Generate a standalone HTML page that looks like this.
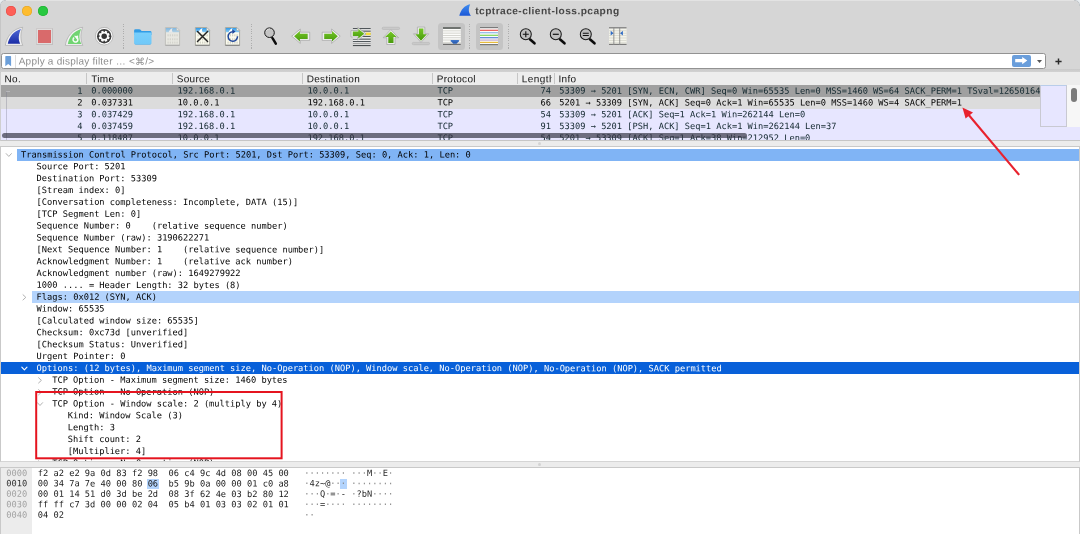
<!DOCTYPE html><html><head><meta charset="utf-8"><title>tcptrace-client-loss.pcapng</title><style>
*{margin:0;padding:0;box-sizing:border-box}
html,body{width:1080px;height:534px;overflow:hidden;background:#ececec}
body{position:relative;font-family:"Liberation Sans",sans-serif;}
.row,.hd,#title,#ph{filter:contrast(1)}
.abs{position:absolute}
.mono{font-family:"DejaVu Sans Mono","Liberation Mono",monospace;font-size:8.7px;white-space:pre;letter-spacing:0}
.row{position:absolute;left:0;height:11.77px;line-height:11.77px;white-space:pre}
.drow{height:11.86px;line-height:11.86px}
.hd{position:absolute;height:13px;line-height:13.5px;font-size:10px;letter-spacing:0.3px;color:#141414;white-space:pre;overflow:hidden}
.sep{position:absolute;top:73px;width:1px;height:10.5px;background:#c6c6c6}
svg{position:absolute;overflow:visible}
</style></head><body>
<div class="abs" id="chrome" style="left:0;top:0;width:1080px;height:72px;background:#d6d6d6"></div>
<div class="abs" style="left:0;top:0;width:1080px;height:1.2px;background:linear-gradient(#e8e8e8,#dedede)"></div>
<div class="abs" style="left:0;top:0;width:6px;height:6px;background:radial-gradient(circle at 100% 100%,rgba(0,0,0,0) 5.2px,#bfc3c6 5.6px,#dfe4e8 6.3px,#e9eef1 7px)"></div>
<div class="abs" style="left:1074px;top:0;width:6px;height:6px;background:radial-gradient(circle at 0 100%,rgba(0,0,0,0) 5.2px,#bfc3c6 5.6px,#dfe4e8 6.3px,#e9eef1 7px)"></div>
<div class="abs" style="left:0;top:6px;width:1px;height:66px;background:#c6c6c6"></div>
<div class="abs" style="left:6.15px;top:6.05px;width:9.9px;height:9.9px;border-radius:50%;background:#fe5f57;box-shadow:inset 0 0 0 0.5px #e2463f"></div>
<div class="abs" style="left:22.049999999999997px;top:6.05px;width:9.9px;height:9.9px;border-radius:50%;background:#febc2e;box-shadow:inset 0 0 0 0.5px #dea123"></div>
<div class="abs" style="left:37.95px;top:6.05px;width:9.9px;height:9.9px;border-radius:50%;background:#28c840;box-shadow:inset 0 0 0 0.5px #1aab29"></div>
<div class="abs" id="title" style="left:475px;top:4px;transform-origin:0 0;transform:matrix(1,0.0005,0,1,0.20,0.30);height:14px;line-height:14px;font-size:10.2px;font-weight:bold;color:#474747;white-space:pre;letter-spacing:0.44px">tcptrace-client-loss.pcapng</div>
<svg style="left:5px;top:27px" width="18.4" height="19" viewBox="0 0 18.4 19"><defs><linearGradient id="gfb" x1="0" y1="0" x2="0" y2="1"><stop offset="0" stop-color="#4f68d6"/><stop offset="1" stop-color="#1a2ca6"/></linearGradient></defs><path d="M0.3 18.4 C1.8 9.2 7.8 1.9 17.7 0.2 C15.4 6 15.2 13 17.8 18.4 Z" fill="#f1f1f1" stroke="#a9a9a9" stroke-width="0.7" stroke-linejoin="round"/><path d="M2.8 16.7 C4 10 8.8 3.8 16 1.9 C13.6 6.6 13 12.4 15.2 16.7 Z" fill="url(#gfb)"/></svg>
<div class="abs" style="left:35.8px;top:27.9px;width:16.9px;height:16.8px;background:#dfdddd;border:1px solid #cdcaca;border-right-color:#c2c0c0;border-bottom-color:#c2c0c0"></div>
<div class="abs" style="left:38.1px;top:30px;width:12.9px;height:12.9px;background:#d96a6b"></div>
<svg style="left:65px;top:27px" width="18.4" height="19" viewBox="0 0 18.4 19"><path d="M0.3 18.4 C1.8 9.2 7.8 1.9 17.7 0.2 C15.4 6 15.2 13 17.8 18.4 Z" fill="#f1f1f1" stroke="#a9a9a9" stroke-width="0.7" stroke-linejoin="round"/><path d="M2.8 16.9 C4 10 9 3.8 16.2 1.9 C14 6.6 13.6 12.4 16.5 16.9 Z" fill="#70d471"/><path d="M12.4 11.2 A2.4 2.4 0 1 1 9.2 10.6" stroke="#f6fdf6" stroke-width="1.5" fill="none"/><path d="M12.5 8.6 V12.4" stroke="#f6fdf6" stroke-width="1.3" fill="none"/><path d="M9 8.8 L12.6 9 L11.8 12.2 Z" fill="#f6fdf6"/></svg>
<svg style="left:95.4px;top:27.2px" width="18.4" height="18.4" viewBox="0 0 18.4 18.4"><circle cx="9.2" cy="9.2" r="8.75" fill="#fcfcfc" stroke="#8a8a8a" stroke-width="0.5"/><circle cx="9.2" cy="9.2" r="7.2" fill="#3a3a3a"/><g transform="translate(9.2 9.2)"><rect x="-1.25" y="-5.5" width="2.5" height="2.4" rx="0.3" fill="#fbfbfb" transform="rotate(22.5)"/><rect x="-1.25" y="-5.5" width="2.5" height="2.4" rx="0.3" fill="#fbfbfb" transform="rotate(67.5)"/><rect x="-1.25" y="-5.5" width="2.5" height="2.4" rx="0.3" fill="#fbfbfb" transform="rotate(112.5)"/><rect x="-1.25" y="-5.5" width="2.5" height="2.4" rx="0.3" fill="#fbfbfb" transform="rotate(157.5)"/><rect x="-1.25" y="-5.5" width="2.5" height="2.4" rx="0.3" fill="#fbfbfb" transform="rotate(202.5)"/><rect x="-1.25" y="-5.5" width="2.5" height="2.4" rx="0.3" fill="#fbfbfb" transform="rotate(247.5)"/><rect x="-1.25" y="-5.5" width="2.5" height="2.4" rx="0.3" fill="#fbfbfb" transform="rotate(292.5)"/><rect x="-1.25" y="-5.5" width="2.5" height="2.4" rx="0.3" fill="#fbfbfb" transform="rotate(337.5)"/><circle r="4.3" fill="#fbfbfb"/><circle r="2.75" fill="#333"/></g></svg>
<div class="abs" style="left:122.5px;top:23.5px;width:1px;height:25px;background:repeating-linear-gradient(to bottom,#adadad 0,#adadad 1px,transparent 1px,transparent 2.35px)"></div>
<div class="abs" style="left:251.0px;top:23.5px;width:1px;height:25px;background:repeating-linear-gradient(to bottom,#adadad 0,#adadad 1px,transparent 1px,transparent 2.35px)"></div>
<div class="abs" style="left:469.2px;top:23.5px;width:1px;height:25px;background:repeating-linear-gradient(to bottom,#adadad 0,#adadad 1px,transparent 1px,transparent 2.35px)"></div>
<div class="abs" style="left:507.5px;top:23.5px;width:1px;height:25px;background:repeating-linear-gradient(to bottom,#adadad 0,#adadad 1px,transparent 1px,transparent 2.35px)"></div>
<svg style="left:133.6px;top:28.6px" width="18" height="16" viewBox="0 0 18 16"><defs><linearGradient id="gfo" x1="0" y1="0" x2="0" y2="1"><stop offset="0" stop-color="#78cffc"/><stop offset="1" stop-color="#70c8f8"/></linearGradient></defs><path d="M0.1 1.6 Q0.1 0.2 1.5 0.2 H5.2 Q6 0.2 6.6 0.8 L7.6 1.9 H16.1 Q17.5 1.9 17.5 3.3 V6 H0.1 Z" fill="#319ce6"/><path d="M0.1 3.5 H17.5 V14.1 Q17.5 15.5 16.1 15.5 H1.5 Q0.1 15.5 0.1 14.1 Z" fill="url(#gfo)"/><path d="M0.1 13.9 V14.1 Q0.1 15.5 1.5 15.5 H16.1 Q17.5 15.5 17.5 14.1 V13.9 Q17.5 15 16.1 15 H1.5 Q0.1 15 0.1 13.9 Z" fill="#55aee6"/></svg>
<svg style="left:164.8px;top:26.9px" width="15.2" height="19" viewBox="0 0 15.2 19"><defs><linearGradient id="d1" x1="0" y1="0" x2="0" y2="1"><stop offset="0" stop-color="#2f98e8"/><stop offset="1" stop-color="#8ccdf4"/></linearGradient></defs><g opacity="0.5"><path d="M0.4 0.5 H11.7 L14.6 3.4 V18.3 H0.4 Z" fill="#fbfbee" stroke="#9a9a92" stroke-width="0.8"/><path d="M0.4 18.3 H14.6" stroke="#777" stroke-width="0.9"/><path d="M0.8 0.9 H11.5 L14.2 3.6 V5.2 H0.8 Z" fill="url(#d1)"/><path d="M3.6 5.4 C4.2 3.2 5.6 1.6 7.6 0.9 C6.6 2.6 6.8 4.2 8 5.4 Z" fill="#fff"/><path d="M11.7 0.5 V3.4 H14.6 Z" fill="#fff" stroke="#9a9a92" stroke-width="0.5"/><rect x="2.50" y="7.3" width="1.2" height="2" fill="#a8a89c" opacity="0.5"/><rect x="4.75" y="7.3" width="1.2" height="2" fill="#a8a89c" opacity="0.5"/><rect x="7.00" y="7.3" width="1.2" height="2" fill="#a8a89c" opacity="0.5"/><rect x="9.25" y="7.3" width="1.2" height="2" fill="#a8a89c" opacity="0.5"/><rect x="11.50" y="7.3" width="1.2" height="2" fill="#a8a89c" opacity="0.5"/><rect x="2.50" y="11.3" width="1.2" height="2" fill="#a8a89c" opacity="0.5"/><rect x="4.75" y="11.3" width="1.2" height="2" fill="#a8a89c" opacity="0.5"/><rect x="7.00" y="11.3" width="1.2" height="2" fill="#a8a89c" opacity="0.5"/><rect x="9.25" y="11.3" width="1.2" height="2" fill="#a8a89c" opacity="0.5"/><rect x="11.50" y="11.3" width="1.2" height="2" fill="#a8a89c" opacity="0.5"/><rect x="2.50" y="14.6" width="1.2" height="2" fill="#a8a89c" opacity="0.5"/><rect x="4.75" y="14.6" width="1.2" height="2" fill="#a8a89c" opacity="0.5"/><rect x="7.00" y="14.6" width="1.2" height="2" fill="#a8a89c" opacity="0.5"/><rect x="9.25" y="14.6" width="1.2" height="2" fill="#a8a89c" opacity="0.5"/><rect x="11.50" y="14.6" width="1.2" height="2" fill="#a8a89c" opacity="0.5"/></g></svg>
<svg style="left:194.9px;top:26.9px" width="15.2" height="19" viewBox="0 0 15.2 19"><defs><linearGradient id="d2" x1="0" y1="0" x2="0" y2="1"><stop offset="0" stop-color="#2f98e8"/><stop offset="1" stop-color="#8ccdf4"/></linearGradient></defs><g opacity="1.0"><path d="M0.4 0.5 H11.7 L14.6 3.4 V18.3 H0.4 Z" fill="#fbfbee" stroke="#9a9a92" stroke-width="0.8"/><path d="M0.4 18.3 H14.6" stroke="#777" stroke-width="0.9"/><path d="M0.8 0.9 H11.5 L14.2 3.6 V5.2 H0.8 Z" fill="url(#d2)"/><path d="M3.6 5.4 C4.2 3.2 5.6 1.6 7.6 0.9 C6.6 2.6 6.8 4.2 8 5.4 Z" fill="#fff"/><path d="M11.7 0.5 V3.4 H14.6 Z" fill="#fff" stroke="#9a9a92" stroke-width="0.5"/><rect x="2.50" y="7.3" width="1.2" height="2" fill="#a8a89c" opacity="0.5"/><rect x="4.75" y="7.3" width="1.2" height="2" fill="#a8a89c" opacity="0.5"/><rect x="7.00" y="7.3" width="1.2" height="2" fill="#a8a89c" opacity="0.5"/><rect x="9.25" y="7.3" width="1.2" height="2" fill="#a8a89c" opacity="0.5"/><rect x="11.50" y="7.3" width="1.2" height="2" fill="#a8a89c" opacity="0.5"/><rect x="2.50" y="11.3" width="1.2" height="2" fill="#a8a89c" opacity="0.5"/><rect x="4.75" y="11.3" width="1.2" height="2" fill="#a8a89c" opacity="0.5"/><rect x="7.00" y="11.3" width="1.2" height="2" fill="#a8a89c" opacity="0.5"/><rect x="9.25" y="11.3" width="1.2" height="2" fill="#a8a89c" opacity="0.5"/><rect x="11.50" y="11.3" width="1.2" height="2" fill="#a8a89c" opacity="0.5"/><rect x="2.50" y="14.6" width="1.2" height="2" fill="#a8a89c" opacity="0.5"/><rect x="4.75" y="14.6" width="1.2" height="2" fill="#a8a89c" opacity="0.5"/><rect x="7.00" y="14.6" width="1.2" height="2" fill="#a8a89c" opacity="0.5"/><rect x="9.25" y="14.6" width="1.2" height="2" fill="#a8a89c" opacity="0.5"/><rect x="11.50" y="14.6" width="1.2" height="2" fill="#a8a89c" opacity="0.5"/></g><path d="M2.5 4.5 L12.6 14.5 M12.6 4.5 L2.5 14.5" stroke="#242424" stroke-width="1.5" stroke-linecap="round" fill="none"/></svg>
<svg style="left:224.9px;top:26.9px" width="15.2" height="19" viewBox="0 0 15.2 19"><defs><linearGradient id="d3" x1="0" y1="0" x2="0" y2="1"><stop offset="0" stop-color="#2f98e8"/><stop offset="1" stop-color="#8ccdf4"/></linearGradient></defs><g opacity="1.0"><path d="M0.4 0.5 H11.7 L14.6 3.4 V18.3 H0.4 Z" fill="#fbfbee" stroke="#9a9a92" stroke-width="0.8"/><path d="M0.4 18.3 H14.6" stroke="#777" stroke-width="0.9"/><path d="M0.8 0.9 H11.5 L14.2 3.6 V5.2 H0.8 Z" fill="url(#d3)"/><path d="M3.6 5.4 C4.2 3.2 5.6 1.6 7.6 0.9 C6.6 2.6 6.8 4.2 8 5.4 Z" fill="#fff"/><path d="M11.7 0.5 V3.4 H14.6 Z" fill="#fff" stroke="#9a9a92" stroke-width="0.5"/><rect x="2.50" y="7.3" width="1.2" height="2" fill="#a8a89c" opacity="0.5"/><rect x="4.75" y="7.3" width="1.2" height="2" fill="#a8a89c" opacity="0.5"/><rect x="7.00" y="7.3" width="1.2" height="2" fill="#a8a89c" opacity="0.5"/><rect x="9.25" y="7.3" width="1.2" height="2" fill="#a8a89c" opacity="0.5"/><rect x="11.50" y="7.3" width="1.2" height="2" fill="#a8a89c" opacity="0.5"/><rect x="2.50" y="11.3" width="1.2" height="2" fill="#a8a89c" opacity="0.5"/><rect x="4.75" y="11.3" width="1.2" height="2" fill="#a8a89c" opacity="0.5"/><rect x="7.00" y="11.3" width="1.2" height="2" fill="#a8a89c" opacity="0.5"/><rect x="9.25" y="11.3" width="1.2" height="2" fill="#a8a89c" opacity="0.5"/><rect x="11.50" y="11.3" width="1.2" height="2" fill="#a8a89c" opacity="0.5"/><rect x="2.50" y="14.6" width="1.2" height="2" fill="#a8a89c" opacity="0.5"/><rect x="4.75" y="14.6" width="1.2" height="2" fill="#a8a89c" opacity="0.5"/><rect x="7.00" y="14.6" width="1.2" height="2" fill="#a8a89c" opacity="0.5"/><rect x="9.25" y="14.6" width="1.2" height="2" fill="#a8a89c" opacity="0.5"/><rect x="11.50" y="14.6" width="1.2" height="2" fill="#a8a89c" opacity="0.5"/></g><path d="M12.5 9.2 A4.7 4.7 0 1 1 7.8 4.8" stroke="#1f469a" stroke-width="1.5" fill="none"/><path d="M7.4 2.4 L10.6 4.6 L7.4 7 Z" fill="#1f469a"/></svg>
<svg style="left:262px;top:26px" width="18" height="20" viewBox="0 0 18 20"><path d="M10.5 12.2 L13.8 17.6" stroke="#0c0c0c" stroke-width="2.5" stroke-linecap="round"/><path d="M9.2 10 L10.6 12.4" stroke="#0c0c0c" stroke-width="1.3"/><circle cx="7.5" cy="6.7" r="4.8" fill="#c4c4c4" stroke="#161616" stroke-width="1"/><path d="M4.2 5.2 A3.8 3.8 0 0 1 8 2.8" stroke="#e6e6e6" stroke-width="0.7" fill="none"/></svg>
<svg style="left:292.1px;top:29px" width="17.9" height="14.4" viewBox="0 0 17.9 14.4"><defs><linearGradient id="ga1" x1="0" y1="0" x2="0" y2="1"><stop offset="0" stop-color="#74c626"/><stop offset="1" stop-color="#489a0d"/></linearGradient></defs><g><path d="M-0.3 7.2 L8.3 0 V3.2 H17.7 V11.4 H8.3 V14.4 Z" fill="#efefef" stroke="#a2a2a2" stroke-width="0.7" stroke-linejoin="round"/><path d="M2.1 7.2 L7.9 2.1 V4.7 H15.7 V9.9 H7.9 V12.5 Z" fill="url(#ga1)"/></g></svg>
<svg style="left:322.1px;top:29px" width="17.9" height="14.4" viewBox="0 0 17.9 14.4"><defs><linearGradient id="ga2" x1="0" y1="0" x2="0" y2="1"><stop offset="0" stop-color="#74c626"/><stop offset="1" stop-color="#489a0d"/></linearGradient></defs><g transform="translate(17.9 0) scale(-1 1)"><path d="M-0.3 7.2 L8.3 0 V3.2 H17.7 V11.4 H8.3 V14.4 Z" fill="#efefef" stroke="#a2a2a2" stroke-width="0.7" stroke-linejoin="round"/><path d="M2.1 7.2 L7.9 2.1 V4.7 H15.7 V9.9 H7.9 V12.5 Z" fill="url(#ga2)"/></g></svg>
<svg style="left:351.2px;top:26.8px" width="20.2" height="19.6" viewBox="0 0 20.2 19.6"><defs><linearGradient id="gg" x1="0" y1="0" x2="0" y2="1"><stop offset="0" stop-color="#74c626"/><stop offset="1" stop-color="#489a0d"/></linearGradient></defs><rect x="1.9" y="1" width="17.8" height="18" fill="#ebebeb"/><rect x="1.9" y="1.0" width="17.8" height="1.1" fill="#50565a"/><rect x="1.9" y="3.6" width="17.8" height="1.1" fill="#50565a"/><rect x="1.9" y="6.3" width="17.8" height="1.1" fill="#5a6064"/><rect x="1.9" y="8.9" width="17.8" height="1.1" fill="#50565a"/><rect x="1.9" y="11.6" width="17.8" height="1.1" fill="#50565a"/><rect x="1.9" y="14.0" width="17.8" height="1.1" fill="#50565a"/><rect x="1.9" y="16.1" width="17.8" height="1.1" fill="#9a9c9c"/><rect x="1.9" y="18.0" width="17.8" height="1.1" fill="#4a4e50"/><rect x="14.6" y="5.6" width="5.1" height="2.5" fill="#f5dd3c"/><rect x="1.9" y="10.1" width="4.2" height="1.5" fill="#f8f8f8"/><path d="M0 3.6 H6.8 V0.4 L15 6.8 L6.8 13.2 V10 H0 Z" fill="#efefef" stroke="#a2a2a2" stroke-width="0.7" stroke-linejoin="round"/><path d="M1.8 4.6 H7.3 V2 L13.3 6.8 L7.3 11.6 V9 H1.8 Z" fill="url(#gg)"/></svg>
<svg style="left:382.2px;top:27.2px" width="18" height="18" viewBox="0 0 18 18"><defs><linearGradient id="gt" x1="0" y1="0" x2="0" y2="1"><stop offset="0" stop-color="#74c626"/><stop offset="1" stop-color="#489a0d"/></linearGradient></defs><rect x="0.2" y="0.2" width="17.4" height="2.3" rx="1.1" fill="#c9c9c9" stroke="#b0b0b0" stroke-width="0.5"/><path d="M8.8 2.6 L16.6 10.7 H13 V17.5 H4.8 V10.7 H1.2 Z" fill="#efefef" stroke="#a2a2a2" stroke-width="0.7" stroke-linejoin="round"/><path d="M8.8 4.6 L14.8 10 H11.5 V16.1 H6.3 V10 H3 Z" fill="url(#gt)"/></svg>
<svg style="left:412.3px;top:27.2px" width="18" height="18" viewBox="0 0 18 18"><defs><linearGradient id="gb" x1="0" y1="0" x2="0" y2="1"><stop offset="0" stop-color="#74c626"/><stop offset="1" stop-color="#489a0d"/></linearGradient></defs><rect x="0.2" y="15.4" width="17.4" height="2.3" rx="1.1" fill="#c9c9c9" stroke="#b0b0b0" stroke-width="0.5"/><path d="M9 15.4 L16.7 6.8 H12.8 V0.1 H5.4 V6.8 H1.5 Z" fill="#efefef" stroke="#a2a2a2" stroke-width="0.7" stroke-linejoin="round"/><path d="M9 13.8 L14.9 7.3 H11.4 V1.6 H6.9 V7.3 H3.3 Z" fill="url(#gb)"/></svg>
<div class="abs" style="left:438px;top:23.2px;width:27.2px;height:26.8px;border-radius:3.5px;background:#c4c4c4"></div>
<svg style="left:442.6px;top:27.1px" width="17.8" height="17.8" viewBox="0 0 17.8 17.8"><rect x="0" y="0" width="17.8" height="17.8" fill="#fcfcfa"/><rect x="0" y="0" width="17.8" height="2" fill="#6f7370"/><rect x="0" y="3.4" width="17.8" height="0.9" fill="#d2d2cc"/><rect x="0" y="5.7" width="17.8" height="0.9" fill="#d2d2cc"/><rect x="0" y="8.0" width="17.8" height="0.9" fill="#d2d2cc"/><rect x="0" y="10.3" width="17.8" height="0.9" fill="#d2d2cc"/><rect x="0" y="12.6" width="17.8" height="0.9" fill="#d2d2cc"/><rect x="0" y="14.9" width="17.8" height="0.9" fill="#d2d2cc"/><rect x="0" y="16.7" width="17.8" height="1.1" fill="#4c4c4c"/><path d="M7.8 13.9 H16 L13.6 16.8 H10.2 Z" fill="#2d60b4"/><rect x="7.6" y="13.1" width="8.6" height="1.5" rx="0.7" fill="#3a72c8"/></svg>
<div class="abs" style="left:476.2px;top:23.2px;width:26.8px;height:26.8px;border-radius:3.5px;background:#c4c4c4"></div>
<svg style="left:480.3px;top:26.9px" width="18" height="18.3" viewBox="0 0 18 18.3"><rect x="0" y="0" width="18" height="18.3" fill="#fbfbfb"/><rect x="0" y="0" width="18" height="1.2" fill="#7a7a7a"/><rect x="0" y="2.7" width="18" height="1.2" fill="#ea5350"/><rect x="0" y="5.1" width="18" height="1.2" fill="#8fb8e8"/><rect x="0" y="7.7" width="18" height="1.2" fill="#80d556"/><rect x="0" y="10.1" width="18" height="1.2" fill="#5681d4"/><rect x="0" y="12.5" width="18" height="1.2" fill="#c4aad0"/><rect x="0" y="14.8" width="18" height="1.2" fill="#e8bb3c"/><rect x="0" y="17.1" width="18" height="1.2" fill="#6c6c6c"/></svg>
<svg style="left:518.5px;top:27.9px" width="18" height="18" viewBox="0 0 18 18"><path d="M11.2 11.6 L15.5 15.3" stroke="#0c0c0c" stroke-width="2.6" stroke-linecap="round"/><path d="M9.6 10 L11.4 11.8" stroke="#0c0c0c" stroke-width="1.5"/><circle cx="6.8" cy="6.3" r="5.5" fill="#bfbfbf" stroke="#1a1a1a" stroke-width="1.05"/><path d="M3.8 6.3 H9.8 M6.8 3.3 V9.3" stroke="#111" stroke-width="1.1"/></svg>
<svg style="left:548.5px;top:27.9px" width="18" height="18" viewBox="0 0 18 18"><path d="M11.2 11.6 L15.5 15.3" stroke="#0c0c0c" stroke-width="2.6" stroke-linecap="round"/><path d="M9.6 10 L11.4 11.8" stroke="#0c0c0c" stroke-width="1.5"/><circle cx="6.8" cy="6.3" r="5.5" fill="#bfbfbf" stroke="#1a1a1a" stroke-width="1.05"/><path d="M3.8 6.3 H9.8" stroke="#111" stroke-width="1.2"/></svg>
<svg style="left:578.5px;top:27.9px" width="18" height="18" viewBox="0 0 18 18"><path d="M11.2 11.6 L15.5 15.3" stroke="#0c0c0c" stroke-width="2.6" stroke-linecap="round"/><path d="M9.6 10 L11.4 11.8" stroke="#0c0c0c" stroke-width="1.5"/><circle cx="6.8" cy="6.3" r="5.5" fill="#bfbfbf" stroke="#1a1a1a" stroke-width="1.05"/><path d="M3.8 5.2 H9.8 M3.8 7.5 H9.8" stroke="#111" stroke-width="1.1"/></svg>
<svg style="left:608.9px;top:27px" width="17.6" height="18" viewBox="0 0 17.6 18"><rect x="0" y="0" width="17.6" height="18" fill="#f3f3ea"/><rect x="0" y="3.4" width="17.6" height="0.8" fill="#d6d6cc"/><rect x="0" y="5.8" width="17.6" height="0.8" fill="#d6d6cc"/><rect x="0" y="8.2" width="17.6" height="0.8" fill="#d6d6cc"/><rect x="0" y="10.6" width="17.6" height="0.8" fill="#d6d6cc"/><rect x="0" y="13" width="17.6" height="0.8" fill="#d6d6cc"/><rect x="0" y="15.4" width="17.6" height="0.8" fill="#d6d6cc"/><rect x="0" y="0" width="17.6" height="1.5" fill="#8c8c8c"/><rect x="0" y="16.8" width="17.6" height="1.2" fill="#7a7a7a"/><rect x="4.4" y="0" width="0.9" height="18" fill="#8a8a8a"/><rect x="10.3" y="0" width="0.9" height="18" fill="#8a8a8a"/><path d="M1.7 3.8 L4.5 6.2 L1.7 8.6 Z" fill="#2f6bc4"/><path d="M13.9 3.8 L11.1 6.2 L13.9 8.6 Z" fill="#2f6bc4"/></svg>
<svg style="left:459.3px;top:4.4px" width="12.4" height="12.2" viewBox="0 0 12.4 12.2"><defs><linearGradient id="gtf" x1="0" y1="0" x2="0" y2="1"><stop offset="0" stop-color="#3f8df0"/><stop offset="1" stop-color="#1b57d6"/></linearGradient></defs><path d="M0.3 11.8 C1.6 6 5.6 1.4 11.2 0.3 C9.4 4.2 9.2 8.4 12 11.8 Z" fill="url(#gtf)"/></svg>
<div class="abs" style="left:0;top:68.6px;width:1080px;height:3.3px;background:linear-gradient(#c9c9c9,#d2d2d2)"></div>
<div class="abs" style="left:1.4px;top:53px;width:1044.2px;height:15.8px;background:#fff;border:1px solid #929292;border-radius:2.5px"></div>
<div class="abs" style="left:15px;top:54.5px;width:1px;height:13px;background:#dedede"></div>
<svg style="left:4.7px;top:55.5px" width="6.4" height="10.5" viewBox="0 0 6.4 10.5"><path d="M0.3 0.6 Q0.3 0 0.9 0 H5.5 Q6.1 0 6.1 0.6 V10.3 L3.2 8 L0.3 10.3 Z" fill="#6c9fd9"/></svg>
<div class="abs" id="ph" style="left:18px;top:54px;transform-origin:0 0;transform:matrix(1,0.0005,0,1,0.70,0.45);height:14px;line-height:14.5px;font-size:10px;letter-spacing:0.23px;color:#8d8d8d;white-space:pre">Apply a display filter … &lt;⌘/&gt;</div>
<div class="abs" style="left:1012px;top:55.4px;width:19px;height:11.2px;background:#6a9edb;border-radius:2px"></div>
<svg style="left:1012px;top:55.4px" width="19" height="11.2" viewBox="0 0 19 11.2"><path d="M3.2 3.9 H10.2 V1.9 L15.3 5.6 L10.2 9.3 V7.3 H3.2 Z" fill="#fff"/></svg>
<svg style="left:1036.6px;top:59.6px" width="5" height="3" viewBox="0 0 5 3"><path d="M0 0 H5 L2.5 3 Z" fill="#555"/></svg>
<svg style="left:1054.5px;top:57.5px" width="7" height="7" viewBox="0 0 7 7"><path d="M3.5 0.4 V6.6 M0.4 3.5 H6.6" stroke="#2a2a2a" stroke-width="1.45" fill="none"/></svg>
<div class="abs" style="left:0;top:71.5px;width:1080px;height:69.5px;background:#fff;border:1px solid #c6c6c6;border-left:1px solid #cfcfcf"></div>
<div class="abs" style="left:1px;top:72px;width:1078.5px;height:13px;background:#ededed"></div>
<div class="hd" id="h0" style="left:4px;top:72px;transform-origin:0 0;transform:matrix(1,0.0005,0,1,0.50,0.15);width:80px">No.</div>
<div class="hd" id="h1" style="left:91px;top:72px;transform-origin:0 0;transform:matrix(1,0.0005,0,1,0.30,0.15);width:70px">Time</div>
<div class="hd" id="h2" style="left:176px;top:72px;transform-origin:0 0;transform:matrix(1,0.0005,0,1,0.70,0.15);width:100px">Source</div>
<div class="hd" id="h3" style="left:306px;top:72px;transform-origin:0 0;transform:matrix(1,0.0005,0,1,0.70,0.15);width:100px">Destination</div>
<div class="hd" id="h4" style="left:436px;top:72px;transform-origin:0 0;transform:matrix(1,0.0005,0,1,0.70,0.15);width:70px">Protocol</div>
<div class="hd" id="h5" style="left:521px;top:72px;transform-origin:0 0;transform:matrix(1,0.0005,0,1,0.70,0.15);width:30.3px;letter-spacing:0.46px">Length</div>
<div class="hd" id="h6" style="left:558px;top:72px;transform-origin:0 0;transform:matrix(1,0.0005,0,1,0.50,0.15);width:100px">Info</div>
<div class="sep" style="left:86px"></div>
<div class="sep" style="left:172px"></div>
<div class="sep" style="left:302px"></div>
<div class="sep" style="left:432px"></div>
<div class="sep" style="left:517px"></div>
<div class="sep" style="left:554px"></div>
<div class="abs" id="plist" style="left:1px;top:85px;width:1078.5px;height:55.30000000000001px;overflow:hidden">
<div class="abs" style="left:0;top:23.54px;width:1078.5px;height:40px;background:#e7e6ff"></div>
<div class="abs" style="left:0;top:0.20px;width:1039.3px;height:11.82px;background:#a0a0a0"></div>
<div class="row mono" style="left:0px;top:0px;transform-origin:0 0;transform:matrix(1,0.0005,0,1,0.00,0.60);color:#12272e;width:81.5px;text-align:right">1</div>
<div class="row mono" style="left:90px;top:0px;transform-origin:0 0;transform:matrix(1,0.0005,0,1,0.20,0.60);color:#12272e">0.000000</div>
<div class="row mono" style="left:176px;top:0px;transform-origin:0 0;transform:matrix(1,0.0005,0,1,0.60,0.60);color:#12272e">192.168.0.1</div>
<div class="row mono" style="left:306px;top:0px;transform-origin:0 0;transform:matrix(1,0.0005,0,1,0.40,0.60);color:#12272e">10.0.0.1</div>
<div class="row mono" style="left:436px;top:0px;transform-origin:0 0;transform:matrix(1,0.0005,0,1,0.40,0.60);color:#12272e">TCP</div>
<div class="row mono" style="left:500px;top:0px;transform-origin:0 0;transform:matrix(1,0.0005,0,1,0.00,0.60);color:#12272e;width:50px;text-align:right">74</div>
<div class="row mono" style="left:558px;top:0px;transform-origin:0 0;transform:matrix(1,0.0005,0,1,0.30,0.60);color:#12272e;width:481px;overflow:hidden">53309 → 5201 [SYN, ECN, CWR] Seq=0 Win=65535 Len=0 MSS=1460 WS=64 SACK_PERM=1 TSval=12650164</div>
<div class="abs" style="left:0;top:11.97px;width:1039.3px;height:11.82px;background:#dcdcdc"></div>
<div class="row mono" style="left:0px;top:12px;transform-origin:0 0;transform:matrix(1,0.0005,0,1,0.00,0.37);color:#000;width:81.5px;text-align:right">2</div>
<div class="row mono" style="left:90px;top:12px;transform-origin:0 0;transform:matrix(1,0.0005,0,1,0.20,0.37);color:#000">0.037331</div>
<div class="row mono" style="left:176px;top:12px;transform-origin:0 0;transform:matrix(1,0.0005,0,1,0.60,0.37);color:#000">10.0.0.1</div>
<div class="row mono" style="left:306px;top:12px;transform-origin:0 0;transform:matrix(1,0.0005,0,1,0.40,0.37);color:#000">192.168.0.1</div>
<div class="row mono" style="left:436px;top:12px;transform-origin:0 0;transform:matrix(1,0.0005,0,1,0.40,0.37);color:#000">TCP</div>
<div class="row mono" style="left:500px;top:12px;transform-origin:0 0;transform:matrix(1,0.0005,0,1,0.00,0.37);color:#000;width:50px;text-align:right">66</div>
<div class="row mono" style="left:558px;top:12px;transform-origin:0 0;transform:matrix(1,0.0005,0,1,0.30,0.37);color:#000;width:481px;overflow:hidden">5201 → 53309 [SYN, ACK] Seq=0 Ack=1 Win=65535 Len=0 MSS=1460 WS=4 SACK_PERM=1</div>
<div class="abs" style="left:0;top:23.74px;width:1039.3px;height:11.82px;background:#e7e6ff"></div>
<div class="row mono" style="left:0px;top:24px;transform-origin:0 0;transform:matrix(1,0.0005,0,1,0.00,0.14);color:#12272e;width:81.5px;text-align:right">3</div>
<div class="row mono" style="left:90px;top:24px;transform-origin:0 0;transform:matrix(1,0.0005,0,1,0.20,0.14);color:#12272e">0.037429</div>
<div class="row mono" style="left:176px;top:24px;transform-origin:0 0;transform:matrix(1,0.0005,0,1,0.60,0.14);color:#12272e">192.168.0.1</div>
<div class="row mono" style="left:306px;top:24px;transform-origin:0 0;transform:matrix(1,0.0005,0,1,0.40,0.14);color:#12272e">10.0.0.1</div>
<div class="row mono" style="left:436px;top:24px;transform-origin:0 0;transform:matrix(1,0.0005,0,1,0.40,0.14);color:#12272e">TCP</div>
<div class="row mono" style="left:500px;top:24px;transform-origin:0 0;transform:matrix(1,0.0005,0,1,0.00,0.14);color:#12272e;width:50px;text-align:right">54</div>
<div class="row mono" style="left:558px;top:24px;transform-origin:0 0;transform:matrix(1,0.0005,0,1,0.30,0.14);color:#12272e;width:481px;overflow:hidden">53309 → 5201 [ACK] Seq=1 Ack=1 Win=262144 Len=0</div>
<div class="abs" style="left:0;top:35.51px;width:1039.3px;height:11.82px;background:#e7e6ff"></div>
<div class="row mono" style="left:0px;top:35px;transform-origin:0 0;transform:matrix(1,0.0005,0,1,0.00,0.91);color:#12272e;width:81.5px;text-align:right">4</div>
<div class="row mono" style="left:90px;top:35px;transform-origin:0 0;transform:matrix(1,0.0005,0,1,0.20,0.91);color:#12272e">0.037459</div>
<div class="row mono" style="left:176px;top:35px;transform-origin:0 0;transform:matrix(1,0.0005,0,1,0.60,0.91);color:#12272e">192.168.0.1</div>
<div class="row mono" style="left:306px;top:35px;transform-origin:0 0;transform:matrix(1,0.0005,0,1,0.40,0.91);color:#12272e">10.0.0.1</div>
<div class="row mono" style="left:436px;top:35px;transform-origin:0 0;transform:matrix(1,0.0005,0,1,0.40,0.91);color:#12272e">TCP</div>
<div class="row mono" style="left:500px;top:35px;transform-origin:0 0;transform:matrix(1,0.0005,0,1,0.00,0.91);color:#12272e;width:50px;text-align:right">91</div>
<div class="row mono" style="left:558px;top:35px;transform-origin:0 0;transform:matrix(1,0.0005,0,1,0.30,0.91);color:#12272e;width:481px;overflow:hidden">53309 → 5201 [PSH, ACK] Seq=1 Ack=1 Win=262144 Len=37</div>
<div class="abs" style="left:0;top:47.28px;width:1039.3px;height:9.05px;background:#e7e6ff"></div>
<div class="row mono" style="left:0px;top:47px;transform-origin:0 0;transform:matrix(1,0.0005,0,1,0.00,0.68);color:#12272e;width:81.5px;text-align:right">5</div>
<div class="row mono" style="left:90px;top:47px;transform-origin:0 0;transform:matrix(1,0.0005,0,1,0.20,0.68);color:#12272e">0.118487</div>
<div class="row mono" style="left:176px;top:47px;transform-origin:0 0;transform:matrix(1,0.0005,0,1,0.60,0.68);color:#12272e">10.0.0.1</div>
<div class="row mono" style="left:306px;top:47px;transform-origin:0 0;transform:matrix(1,0.0005,0,1,0.40,0.68);color:#12272e">192.168.0.1</div>
<div class="row mono" style="left:436px;top:47px;transform-origin:0 0;transform:matrix(1,0.0005,0,1,0.40,0.68);color:#12272e">TCP</div>
<div class="row mono" style="left:500px;top:47px;transform-origin:0 0;transform:matrix(1,0.0005,0,1,0.00,0.68);color:#12272e;width:50px;text-align:right">54</div>
<div class="row mono" style="left:558px;top:47px;transform-origin:0 0;transform:matrix(1,0.0005,0,1,0.30,0.68);color:#12272e;width:481px;overflow:hidden">5201 → 53309 [ACK] Seq=1 Ack=38 Win=212952 Len=0</div>
<div class="abs" style="left:5px;top:5.88px;width:1px;height:60px;background:rgba(120,120,140,0.35)"></div>
<div class="abs" style="left:5px;top:5.88px;width:4px;height:1px;background:rgba(200,200,205,0.6)"></div>
<div class="abs" style="left:1065.5px;top:0;width:13px;height:42.3px;background:#f7f7f7"></div>
<div class="abs" style="left:1039.3px;top:0.2px;width:26.5px;height:42.2px;background:#e7e6ff;border:1px solid #c9c9d2;border-top-color:#b9cdea"></div>
<div class="abs" style="left:1069.6px;top:2.8px;width:6.2px;height:13.8px;border-radius:3.1px;background:#7b7b7b"></div>
<div class="abs" style="left:1.3px;top:47.8px;width:745px;height:5px;border-radius:2.5px;background:rgba(52,52,66,0.68)"></div>
</div>
<div class="abs" style="left:538px;top:142.3px;width:3px;height:3px;border-radius:50%;background:#d4d4d4"></div>
<div class="abs" style="left:0;top:146.3px;width:1080px;height:315.5px;background:#fff;border:1px solid #c9c9c9;border-bottom-color:#d5d5d5"></div>
<div class="abs" id="det" style="left:0;top:147px;width:1079px;height:314.1px;overflow:hidden">
<div class="abs" style="left:16.8px;top:1.90px;width:1063px;height:11.76px;background:#80b4f5"></div>
<svg style="left:0;top:0" width="10" height="10"><path d="M6.20 6.63 L8.80 9.43 L11.40 6.63" stroke="#a8a8a8" stroke-width="0.9" fill="none" stroke-linecap="round" stroke-linejoin="round"/></svg>
<div class="row mono" style="left:21px;top:2px;transform-origin:0 0;transform:matrix(1,0.0005,0,1,0.00,0.40);color:#000">Transmission Control Protocol, Src Port: 5201, Dst Port: 53309, Seq: 0, Ack: 1, Len: 0</div>
<div class="row mono" style="left:36px;top:14px;transform-origin:0 0;transform:matrix(1,0.0005,0,1,0.60,0.26);color:#000">Source Port: 5201</div>
<div class="row mono" style="left:36px;top:26px;transform-origin:0 0;transform:matrix(1,0.0005,0,1,0.60,0.12);color:#000">Destination Port: 53309</div>
<div class="row mono" style="left:36px;top:37px;transform-origin:0 0;transform:matrix(1,0.0005,0,1,0.60,0.98);color:#000">[Stream index: 0]</div>
<div class="row mono" style="left:36px;top:49px;transform-origin:0 0;transform:matrix(1,0.0005,0,1,0.60,0.84);color:#000">[Conversation completeness: Incomplete, DATA (15)]</div>
<div class="row mono" style="left:36px;top:61px;transform-origin:0 0;transform:matrix(1,0.0005,0,1,0.60,0.70);color:#000">[TCP Segment Len: 0]</div>
<div class="row mono" style="left:36px;top:73px;transform-origin:0 0;transform:matrix(1,0.0005,0,1,0.60,0.56);color:#000">Sequence Number: 0    (relative sequence number)</div>
<div class="row mono" style="left:36px;top:85px;transform-origin:0 0;transform:matrix(1,0.0005,0,1,0.60,0.42);color:#000">Sequence Number (raw): 3190622271</div>
<div class="row mono" style="left:36px;top:97px;transform-origin:0 0;transform:matrix(1,0.0005,0,1,0.60,0.28);color:#000">[Next Sequence Number: 1    (relative sequence number)]</div>
<div class="row mono" style="left:36px;top:109px;transform-origin:0 0;transform:matrix(1,0.0005,0,1,0.60,0.14);color:#000">Acknowledgment Number: 1    (relative ack number)</div>
<div class="row mono" style="left:36px;top:121px;transform-origin:0 0;transform:matrix(1,0.0005,0,1,0.60,0.00);color:#000">Acknowledgment number (raw): 1649279922</div>
<div class="row mono" style="left:36px;top:132px;transform-origin:0 0;transform:matrix(1,0.0005,0,1,0.60,0.86);color:#000">1000 .... = Header Length: 32 bytes (8)</div>
<div class="abs" style="left:32.4px;top:144.22px;width:1063px;height:11.76px;background:#b3d3fc"></div>
<svg style="left:0;top:0" width="10" height="10"><path d="M23.00 147.75 L25.80 150.35 L23.00 152.95" stroke="#a8a8a8" stroke-width="0.9" fill="none" stroke-linecap="round" stroke-linejoin="round"/></svg>
<div class="row mono" style="left:36px;top:144px;transform-origin:0 0;transform:matrix(1,0.0005,0,1,0.60,0.72);color:#000">Flags: 0x012 (SYN, ACK)</div>
<div class="row mono" style="left:36px;top:156px;transform-origin:0 0;transform:matrix(1,0.0005,0,1,0.60,0.58);color:#000">Window: 65535</div>
<div class="row mono" style="left:36px;top:168px;transform-origin:0 0;transform:matrix(1,0.0005,0,1,0.60,0.44);color:#000">[Calculated window size: 65535]</div>
<div class="row mono" style="left:36px;top:180px;transform-origin:0 0;transform:matrix(1,0.0005,0,1,0.60,0.30);color:#000">Checksum: 0xc73d [unverified]</div>
<div class="row mono" style="left:36px;top:192px;transform-origin:0 0;transform:matrix(1,0.0005,0,1,0.60,0.16);color:#000">[Checksum Status: Unverified]</div>
<div class="row mono" style="left:36px;top:204px;transform-origin:0 0;transform:matrix(1,0.0005,0,1,0.60,0.02);color:#000">Urgent Pointer: 0</div>
<div class="abs" style="left:1px;top:215.38px;width:1079px;height:11.96px;background:#0860d9"></div>
<svg style="left:0;top:0" width="10" height="10"><path d="M21.80 220.11 L24.40 222.91 L27.00 220.11" stroke="#fff" stroke-width="1.1" fill="none" stroke-linecap="round" stroke-linejoin="round"/></svg>
<div class="row mono" style="left:36px;top:215px;transform-origin:0 0;transform:matrix(1,0.0005,0,1,0.60,0.88);color:#fff">Options: (12 bytes), Maximum segment size, No-Operation (NOP), Window scale, No-Operation (NOP), No-Operation (NOP), SACK permitted</div>
<svg style="left:0;top:0" width="10" height="10"><path d="M38.60 230.77 L41.40 233.37 L38.60 235.97" stroke="#a8a8a8" stroke-width="0.9" fill="none" stroke-linecap="round" stroke-linejoin="round"/></svg>
<div class="row mono" style="left:52px;top:227px;transform-origin:0 0;transform:matrix(1,0.0005,0,1,0.20,0.74);color:#000">TCP Option - Maximum segment size: 1460 bytes</div>
<svg style="left:0;top:0" width="10" height="10"><path d="M38.60 242.63 L41.40 245.23 L38.60 247.83" stroke="#a8a8a8" stroke-width="0.9" fill="none" stroke-linecap="round" stroke-linejoin="round"/></svg>
<div class="row mono" style="left:52px;top:239px;transform-origin:0 0;transform:matrix(1,0.0005,0,1,0.20,0.60);color:#000">TCP Option - No-Operation (NOP)</div>
<svg style="left:0;top:0" width="10" height="10"><path d="M37.40 255.69 L40.00 258.49 L42.60 255.69" stroke="#a8a8a8" stroke-width="0.9" fill="none" stroke-linecap="round" stroke-linejoin="round"/></svg>
<div class="row mono" style="left:52px;top:251px;transform-origin:0 0;transform:matrix(1,0.0005,0,1,0.20,0.46);color:#000">TCP Option - Window scale: 2 (multiply by 4)</div>
<div class="row mono" style="left:67px;top:263px;transform-origin:0 0;transform:matrix(1,0.0005,0,1,0.80,0.32);color:#000">Kind: Window Scale (3)</div>
<div class="row mono" style="left:67px;top:275px;transform-origin:0 0;transform:matrix(1,0.0005,0,1,0.80,0.18);color:#000">Length: 3</div>
<div class="row mono" style="left:67px;top:287px;transform-origin:0 0;transform:matrix(1,0.0005,0,1,0.80,0.04);color:#000">Shift count: 2</div>
<div class="row mono" style="left:67px;top:298px;transform-origin:0 0;transform:matrix(1,0.0005,0,1,0.80,0.90);color:#000">[Multiplier: 4]</div>
<svg style="left:0;top:0" width="10" height="10"><path d="M38.60 313.79 L41.40 316.39 L38.60 318.99" stroke="#a8a8a8" stroke-width="0.9" fill="none" stroke-linecap="round" stroke-linejoin="round"/></svg>
<div class="row mono" style="left:52px;top:310px;transform-origin:0 0;transform:matrix(1,0.0005,0,1,0.20,0.76);color:#000">TCP Option - No-Operation (NOP)</div>
</div>
<div class="abs" style="left:538px;top:463.3px;width:3px;height:3px;border-radius:50%;background:#d2d2d2"></div>
<div class="abs" style="left:0;top:467.2px;width:1080px;height:68.80000000000001px;background:#fff;border:1px solid #c9c9c9"></div>
<div class="abs" style="left:1px;top:468.2px;width:31.3px;height:66.80000000000001px;background:#ececec"></div>
<div class="row mono" style="left:6px;top:467px;transform-origin:0 0;transform:matrix(1,0.0005,0,1,0.20,0.90);height:10.45px;line-height:10.45px;color:#a2a2a2">0000</div>
<div class="row mono" style="left:37px;top:467px;transform-origin:0 0;transform:matrix(1,0.0005,0,1,0.80,0.90);height:10.45px;line-height:10.45px;color:#1a1a1a">f2 a2 e2 9a 0d 83 f2 98  06 c4 9c 4d 08 00 45 00</div>
<div class="row mono" style="left:304px;top:467px;transform-origin:0 0;transform:matrix(1,0.0005,0,1,0.20,0.90);height:10.45px;line-height:10.45px;color:#2a2a2a"><span style="color:#8a8a8a">········</span> <span style="color:#8a8a8a">···</span>M<span style="color:#8a8a8a">··</span>E<span style="color:#8a8a8a">·</span></div>
<div class="abs" style="left:147.19px;top:478.55px;width:11.67px;height:10.25px;background:#b3d4fd"></div>
<div class="abs" style="left:340.36px;top:478.55px;width:6.54px;height:10.25px;background:#b3d4fd"></div>
<div class="row mono" style="left:6px;top:478px;transform-origin:0 0;transform:matrix(1,0.0005,0,1,0.20,0.35);height:10.45px;line-height:10.45px;color:#2e2e2e">0010</div>
<div class="row mono" style="left:37px;top:478px;transform-origin:0 0;transform:matrix(1,0.0005,0,1,0.80,0.35);height:10.45px;line-height:10.45px;color:#1a1a1a">00 34 7a 7e 40 00 80 06  b5 9b 0a 00 00 01 c0 a8</div>
<div class="row mono" style="left:304px;top:478px;transform-origin:0 0;transform:matrix(1,0.0005,0,1,0.20,0.35);height:10.45px;line-height:10.45px;color:#2a2a2a"><span style="color:#8a8a8a">·</span>4z~@<span style="color:#8a8a8a">···</span> <span style="color:#8a8a8a">········</span></div>
<div class="row mono" style="left:6px;top:488px;transform-origin:0 0;transform:matrix(1,0.0005,0,1,0.20,0.80);height:10.45px;line-height:10.45px;color:#a2a2a2">0020</div>
<div class="row mono" style="left:37px;top:488px;transform-origin:0 0;transform:matrix(1,0.0005,0,1,0.80,0.80);height:10.45px;line-height:10.45px;color:#1a1a1a">00 01 14 51 d0 3d be 2d  08 3f 62 4e 03 b2 80 12</div>
<div class="row mono" style="left:304px;top:488px;transform-origin:0 0;transform:matrix(1,0.0005,0,1,0.20,0.80);height:10.45px;line-height:10.45px;color:#2a2a2a"><span style="color:#8a8a8a">···</span>Q<span style="color:#8a8a8a">·</span>=<span style="color:#8a8a8a">·</span>- <span style="color:#8a8a8a">·</span>?bN<span style="color:#8a8a8a">····</span></div>
<div class="row mono" style="left:6px;top:499px;transform-origin:0 0;transform:matrix(1,0.0005,0,1,0.20,0.25);height:10.45px;line-height:10.45px;color:#a2a2a2">0030</div>
<div class="row mono" style="left:37px;top:499px;transform-origin:0 0;transform:matrix(1,0.0005,0,1,0.80,0.25);height:10.45px;line-height:10.45px;color:#1a1a1a">ff ff c7 3d 00 00 02 04  05 b4 01 03 03 02 01 01</div>
<div class="row mono" style="left:304px;top:499px;transform-origin:0 0;transform:matrix(1,0.0005,0,1,0.20,0.25);height:10.45px;line-height:10.45px;color:#2a2a2a"><span style="color:#8a8a8a">···</span>=<span style="color:#8a8a8a">····</span> <span style="color:#8a8a8a">········</span></div>
<div class="row mono" style="left:6px;top:509px;transform-origin:0 0;transform:matrix(1,0.0005,0,1,0.20,0.70);height:10.45px;line-height:10.45px;color:#a2a2a2">0040</div>
<div class="row mono" style="left:37px;top:509px;transform-origin:0 0;transform:matrix(1,0.0005,0,1,0.80,0.70);height:10.45px;line-height:10.45px;color:#1a1a1a">04 02</div>
<div class="row mono" style="left:304px;top:509px;transform-origin:0 0;transform:matrix(1,0.0005,0,1,0.20,0.70);height:10.45px;line-height:10.45px;color:#2a2a2a"><span style="color:#8a8a8a">··</span></div>
<svg style="left:0;top:0" width="1080" height="534" viewBox="0 0 1080 534"><rect x="36.2" y="392" width="245.4" height="66.3" fill="none" stroke="#e5141f" stroke-width="2"/><path d="M1018.6 174.3 L967.5 113.5" stroke="#e8222e" stroke-width="2.1" stroke-linecap="round" fill="none"/><path d="M962.4 107.6 L973 112.6 L965.6 118.4 Z" fill="#e8222e"/></svg>
</body></html>
